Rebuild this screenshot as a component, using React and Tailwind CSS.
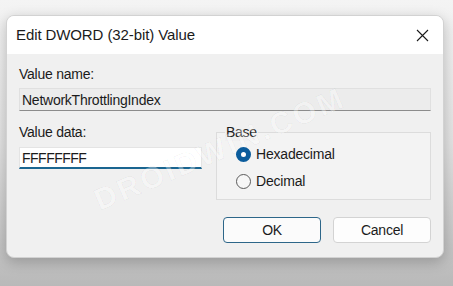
import { useState } from 'react'

const font = "font-['Liberation_Sans','Noto_Sans',sans-serif]"

function Radio({ checked, label, onClick }) {
  return (
    <button onClick={onClick} className="relative z-10 flex items-center gap-[5px] h-[18px]">
      {checked ? (
        <span className="shrink-0 box-border w-[15px] h-[15px] rounded-full border-[5px] border-[#0b5c9c] bg-white" />
      ) : (
        <span className="shrink-0 box-border w-[15px] h-[15px] rounded-full border border-[#5b5b5b] bg-[#f7f7f7]" />
      )}
      <span className="text-[14px] leading-[18px] tracking-[-0.2px] text-[#1b1b1b]">{label}</span>
    </button>
  )
}

export default function App() {
  const [base, setBase] = useState('hex')
  const [data, setData] = useState('FFFFFFFF')

  return (
    <div className={`w-[453px] h-[286px] overflow-hidden bg-gradient-to-b from-[#f4f4f4] via-[#e2e2e2] to-[#b9b9b9] pt-[15px] pl-[6px] ${font}`}>
      <div className="relative w-[438px] h-[243px] rounded-[8px] bg-[#f0f0f0] border border-[#d2d2d2] shadow-[0_4px_14px_rgba(0,0,0,0.22)] overflow-hidden">
        {/* title bar */}
        <div className="h-[38px] bg-white flex items-center justify-between pl-[9px] pr-[14px]">
          <span className="text-[15px] leading-[18px] tracking-[-0.1px] text-[#1b1b1b]">Edit DWORD (32-bit) Value</span>
          <svg width="13" height="13" viewBox="0 0 13 13" className="text-[#1b1b1b]">
            <path d="M1 1L12 12M12 1L1 12" stroke="currentColor" strokeWidth="1.1" />
          </svg>
        </div>

        {/* body */}
        <div className="px-[12px] pt-[11px] text-[14px] leading-[18px] tracking-[-0.25px] text-[#1b1b1b]">
          <div>Value name:</div>
          <div className="mt-[5px] h-[23px] flex items-center px-[2px] bg-[#ececec] border border-[#e0e0e0] border-b-[#8c8c8c]">
            NetworkThrottlingIndex
          </div>

          <div className="mt-[12px] flex">
            <div className="w-[183px]">
              <div>Value data:</div>
              <input
                value={data}
                onChange={e => setData(e.target.value)}
                className="mt-[6px] w-full h-[22px] px-[2px] bg-white border border-[#e4e4e4] border-b-2 border-b-[#1a6590] outline-none text-[14px] tracking-[-0.5px]"
              />
            </div>
            <div className="relative ml-auto mt-[9px] w-[215px] h-[68px] border border-[#dcdcdc] bg-[#f3f3f3] pl-[19px] pt-[12px]">
              <span className="absolute -top-[10px] left-[8px] px-[1px] bg-[#f0f0f0] leading-[18px]">Base</span>
              <div className="flex flex-col gap-[9px]">
                <Radio checked={base === 'hex'} label="Hexadecimal" onClick={() => setBase('hex')} />
                <Radio checked={base === 'dec'} label="Decimal" onClick={() => setBase('dec')} />
              </div>
            </div>
          </div>

          <div className="mt-[17px] flex justify-end gap-[12px]">
            <button className="w-[98px] h-[26px] rounded-[4px] bg-[#fbfbfb] border border-[#2d6689] text-[14px]">OK</button>
            <button className="w-[98px] h-[26px] rounded-[4px] bg-[#fdfdfd] border border-[#d3d3d3] text-[14px]">Cancel</button>
          </div>
        </div>

        {/* watermark */}
        <div className="absolute left-[78px] top-[110px] rotate-[-23deg] text-[30px] font-bold tracking-[3px] text-white/35 [-webkit-text-stroke:1px_rgba(0,0,0,0.04)] pointer-events-none select-none">
          DROIDWIN.COM
        </div>
      </div>
    </div>
  )
}
